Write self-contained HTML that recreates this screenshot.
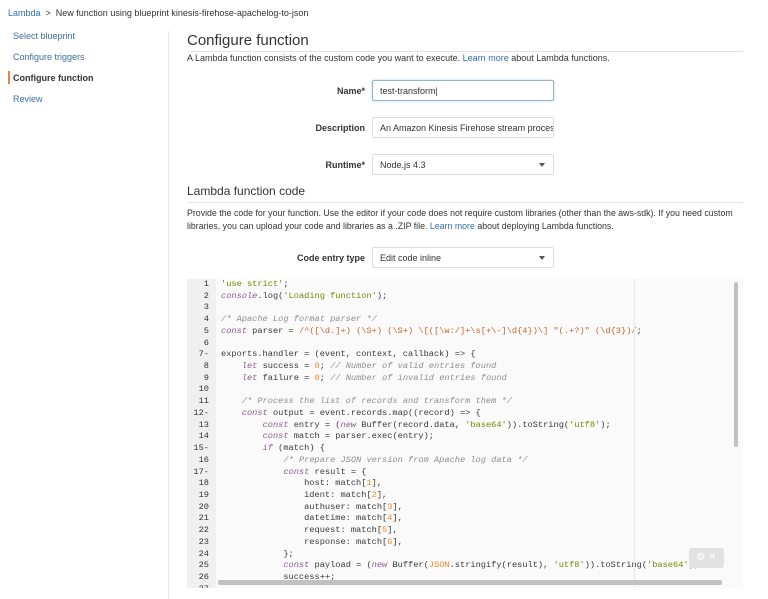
<!DOCTYPE html>
<html><head><meta charset="utf-8"><style>
*{margin:0;padding:0;box-sizing:border-box}
body{width:768px;height:599px;overflow:hidden;background:#fff;font-family:"Liberation Sans",Arial,sans-serif;color:#333;position:relative}
.a{position:absolute;white-space:nowrap}
.lk{color:#2f6fb0}
.nav{font-size:9px;color:#3b6ea5;left:13px}
.lbl{font-size:9px;font-weight:bold;right:403px;text-align:right;color:#333}
.inp{position:absolute;left:372px;width:182px;height:21px;border:1px solid #ddd;border-radius:2px;font-size:9px;padding:5px 7px;color:#333;background:#fff;white-space:nowrap;overflow:hidden}
.caret{position:absolute;right:8px;top:8px;width:0;height:0;border-left:3px solid transparent;border-right:3px solid transparent;border-top:4px solid #555}
#ed{position:absolute;left:187px;top:279px;width:556px;height:309px;background:#fafafa;overflow:hidden}
#gut{position:absolute;left:0;top:0;width:29px;height:100%;background:#f0f0f0}
pre{font-family:"Liberation Mono","DejaVu Sans Mono",monospace;font-size:8.67px;line-height:11.72px;color:#3a3a3a}
#nums{position:absolute;left:0;top:0;width:22px;text-align:right;color:#333}
#code{position:absolute;left:34px;top:0}
.k{color:#8e5a8f;font-style:italic}
.c{color:#8e908c;font-style:italic}
.s{color:#718c00}
.n{color:#f5871f}
.r{color:#c8652f}
</style></head><body>
<div class="a" style="left:8px;top:8px;font-size:9px;color:#333"><span class="lk">Lambda</span> &nbsp;&gt;&nbsp; New function using blueprint kinesis-firehose-apachelog-to-json</div>
<div class="a nav" style="top:31px">Select blueprint</div>
<div class="a nav" style="top:52px">Configure triggers</div>
<div class="a" style="left:8px;top:71px;width:2px;height:13px;background:#e7873a"></div>
<div class="a" style="left:13px;top:73px;font-size:9px;font-weight:bold;color:#333">Configure function</div>
<div class="a nav" style="top:94px">Review</div>
<div class="a" style="left:168px;top:31px;width:1px;height:568px;background:#e5e5e5"></div>

<div class="a" style="left:187px;top:32px;font-size:15px;color:#333">Configure function</div>
<div class="a" style="left:187px;top:51px;width:556px;height:1px;background:#e3e3e3"></div>
<div class="a" style="left:187px;top:53px;font-size:9px">A Lambda function consists of the custom code you want to execute. <span class="lk">Learn more</span> about Lambda functions.</div>

<div class="a lbl" style="top:86px">Name*</div>
<div class="inp" style="top:80px;border-color:#8fb3d9;box-shadow:0 0 2px #b7d1ec">test-transform|</div>
<div class="a lbl" style="top:123px">Description</div>
<div class="inp" style="top:117px">An Amazon Kinesis Firehose stream proces</div>
<div class="a lbl" style="top:160px">Runtime*</div>
<div class="inp" style="top:154px">Node.js 4.3<span class="caret"></span></div>

<div class="a" style="left:187px;top:184px;font-size:12px">Lambda function code</div>
<div class="a" style="left:187px;top:202px;width:556px;height:1px;background:#e3e3e3"></div>
<div class="a" style="left:187px;top:207px;font-size:8.8px;line-height:13px">Provide the code for your function. Use the editor if your code does not require custom libraries (other than the aws-sdk). If you need custom<br>libraries, you can upload your code and libraries as a .ZIP file. <span class="lk">Learn more</span> about deploying Lambda functions.</div>

<div class="a lbl" style="top:253px">Code entry type</div>
<div class="inp" style="top:247px">Edit code inline<span class="caret"></span></div>

<div id="ed">
<div id="gut"></div>
<pre id="nums">1
2
3
4
5
6
7-
8
9
10
11
12-
13
14
15-
16
17-
18
19
20
21
22
23
24
25
26
27</pre>
<pre id="code"><span class="s">'use strict'</span>;
<span class="k">console</span>.log(<span class="s">'Loading function'</span>);

<span class="c">/* Apache Log format parser */</span>
<span class="k">const</span> parser = <span class="r">/^([\d.]+) (\S+) (\S+) \[([\w:/]+\s[+\-]\d{4})\] "(.+?)" (\d{3})/</span>;

exports.handler = (event, context, callback) =&gt; {
    <span class="k">let</span> success = <span class="n">0</span>; <span class="c">// Number of valid entries found</span>
    <span class="k">let</span> failure = <span class="n">0</span>; <span class="c">// Number of invalid entries found</span>

    <span class="c">/* Process the list of records and transform them */</span>
    <span class="k">const</span> output = event.records.map((record) =&gt; {
        <span class="k">const</span> entry = (<span class="k">new</span> Buffer(record.data, <span class="s">'base64'</span>)).toString(<span class="s">'utf8'</span>);
        <span class="k">const</span> match = parser.exec(entry);
        <span class="k">if</span> (match) {
            <span class="c">/* Prepare JSON version from Apache log data */</span>
            <span class="k">const</span> result = {
                host: match[<span class="n">1</span>],
                ident: match[<span class="n">2</span>],
                authuser: match[<span class="n">3</span>],
                datetime: match[<span class="n">4</span>],
                request: match[<span class="n">5</span>],
                response: match[<span class="n">6</span>],
            };
            <span class="k">const</span> payload = (<span class="k">new</span> Buffer(<span class="n">JSON</span>.stringify(result), <span class="s">'utf8'</span>)).toString(<span class="s">'base64'</span>);
            success++;
</pre>
<div class="a" style="left:447px;top:0;width:1px;height:309px;background:#e8e8e8"></div>
<div class="a" style="left:547px;top:3px;width:4px;height:165px;background:#c1c1c1;border-radius:2px"></div>
<div class="a" style="left:31px;top:301px;width:504px;height:5px;background:#c1c1c1;border-radius:2px"></div>
<div class="a" style="left:502px;top:269px;width:35px;height:20px;background:#e2e2e2;border-radius:3px;color:#fff;font-size:10px;text-align:center;line-height:20px">⚙ ✕</div>
</div>
</body></html>
